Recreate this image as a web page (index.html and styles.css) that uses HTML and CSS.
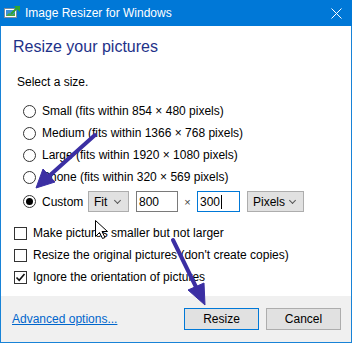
FILE: index.html
```html
<!DOCTYPE html>
<html lang="en">
<head>
    <meta charset="UTF-8">
    <title>Image Resizer for Windows</title>
    <link rel="stylesheet" href="styles.css">
</head>
<body>
    <div class="window">
        <div class="titlebar">
            <svg class="app-icon" width="16" height="13" viewBox="0 0 16 13">
                <rect x="0.5" y="2.5" width="12" height="9" fill="#fff" stroke="#7f8c99"/>
                <rect x="2" y="4" width="9" height="6" fill="#3d8fd6"/>
                <path d="M2 10 L5 7 L8 9 L11 7 L11 10 Z" fill="#4aa83a"/>
                <path d="M7 8 L13 2" stroke="#2fa52f" stroke-width="2"/>
                <path d="M10 0 L16 0 L16 6 Z" fill="#2fa52f"/>
            </svg>
            <span class="title">Image Resizer for Windows</span>
            <svg class="close" width="11" height="11" viewBox="0 0 11 11">
                <path d="M0.5 0.5 L10.5 10.5 M10.5 0.5 L0.5 10.5" stroke="#fff" stroke-width="1"/>
            </svg>
        </div>

        <div class="content">
            <h1 class="heading">Resize your pictures</h1>
            <p class="label">Select a size.</p>

            <div class="sizes">
                <label class="radio-row"><span class="radio"></span>Small (fits within 854 × 480 pixels)</label>
                <label class="radio-row"><span class="radio"></span>Medium (fits within 1366 × 768 pixels)</label>
                <label class="radio-row"><span class="radio"></span>Large (fits within 1920 × 1080 pixels)</label>
                <label class="radio-row"><span class="radio"></span>Phone (fits within 320 × 569 pixels)</label>
                <div class="radio-row custom-row">
                    <span class="radio checked"></span>
                    <span class="custom-label">Custom</span>
                    <span class="select fit">Fit<span class="chevron"></span></span>
                    <span class="textbox">800</span>
                    <span class="times">×</span>
                    <span class="textbox focused">300<span class="caret"></span></span>
                    <span class="select unit">Pixels<span class="chevron"></span></span>
                </div>
            </div>

            <div class="options">
                <label class="check-row"><span class="checkbox"></span>Make pictures smaller but not larger</label>
                <label class="check-row"><span class="checkbox"></span>Resize the original pictures (don't create copies)</label>
                <label class="check-row"><span class="checkbox checked">
                    <svg width="11" height="11" viewBox="0 0 11 11"><path d="M1.5 5.5 L4.2 8.3 L9.5 2" fill="none" stroke="#111" stroke-width="1.6"/></svg>
                </span>Ignore the orientation of pictures</label>
            </div>
        </div>

        <div class="footer">
            <a class="link" href="#">Advanced options...</a>
            <div class="buttons">
                <button class="btn default">Resize</button>
                <button class="btn">Cancel</button>
            </div>
        </div>

        <!-- annotation arrows and mouse pointer drawn over the dialog -->
        <svg class="overlay" width="352" height="343" viewBox="0 0 352 343">
            <g fill="#3b2fa3" stroke="#3b2fa3">
                <path d="M95 135 L48 177" stroke-width="4" stroke-linecap="round"/>
                <path d="M36 188 L43 169 L55 182 Z" stroke-width="1"/>
                <path d="M173 240 L197 289" stroke-width="4" stroke-linecap="round"/>
                <path d="M205 305 L188 290 L204 283 Z" stroke-width="1"/>
            </g>
            <path d="M95.5 220.5 L95.5 236.5 L99.5 232.5 L102.5 238.5 L105 237.5 L102 231.5 L107.5 231.5 Z" fill="#fff" stroke="#000" stroke-width="1"/>
        </svg>
    </div>
</body>
</html>
```

FILE: styles.css
```css
* {
    box-sizing: border-box;
    margin: 0;
    padding: 0;
}

body {
    width: 352px;
    height: 343px;
    overflow: hidden;
    font-family: 'Liberation Sans', Arial, sans-serif;
    font-size: 12px;
    color: #000;
    background: #fff;
}

.window {
    position: relative;
    width: 352px;
    height: 343px;
    display: flex;
    flex-direction: column;
    border: 1px solid #1883d7;
    border-top: none;
    border-right-width: 1px;
}

.titlebar {
    height: 26px;
    margin: 0 -1px;
    background: #0078d7;
    color: #fff;
    display: flex;
    align-items: center;
    padding-left: 4px;
    padding-right: 10px;
}

.app-icon {
    margin-right: 5px;
    margin-top: -1px;
}

.title {
    flex: 1;
    font-size: 12px;
}

.close {
    margin-top: 1px;
}

.content {
    flex: 1;
    padding: 10px 0 0 12px;
}

.heading {
    font-weight: normal;
    font-size: 16px;
    line-height: 22px;
    color: #1e3289;
}

.label {
    margin-top: 16px;
    margin-left: 4px;
    line-height: 16px;
}

.sizes {
    margin-top: 10px;
    padding-left: 10px;
}

.radio-row {
    display: flex;
    align-items: center;
    height: 22px;
}

.radio {
    width: 13px;
    height: 13px;
    border: 1px solid #333;
    border-radius: 50%;
    margin-right: 6px;
    display: flex;
    align-items: center;
    justify-content: center;
}

.radio.checked::after {
    content: '';
    width: 7px;
    height: 7px;
    border-radius: 50%;
    background: #000;
}

.custom-row {
    height: 23px;
    margin-top: 2px;
}

.custom-label {
    width: 46px;
}

.select {
    display: flex;
    align-items: center;
    height: 21px;
    background: #e1e1e1;
    border: 1px solid #adadad;
    padding-left: 5px;
}

.fit {
    width: 41px;
    margin-right: 7px;
}

.unit {
    width: 57px;
    margin-left: 7px;
}

.chevron {
    margin-left: auto;
    margin-right: 8px;
    width: 5px;
    height: 5px;
    border-right: 1px solid #555;
    border-bottom: 1px solid #555;
    transform: rotate(45deg);
    margin-top: -3px;
}

.textbox {
    display: flex;
    align-items: center;
    width: 42px;
    height: 21px;
    border: 1px solid #7a7a7a;
    padding-left: 2px;
}

.textbox.focused {
    width: 43px;
    border-color: #0078d7;
}

.caret {
    width: 1px;
    height: 14px;
    background: #000;
    margin-left: 1px;
}

.times {
    width: 19px;
    text-align: center;
    color: #444;
    font-size: 11px;
}

.options {
    margin-top: 9px;
}

.check-row {
    display: flex;
    align-items: center;
    height: 22px;
}

.checkbox {
    width: 13px;
    height: 13px;
    border: 1px solid #333;
    margin: 0 6px 0 1px;
    display: flex;
    align-items: center;
    justify-content: center;
}

.footer {
    height: 46px;
    background: #f0f0f0;
    display: flex;
    align-items: center;
    justify-content: space-between;
    padding: 0 10px 0 11px;
}

.link {
    color: #0066cc;
    text-decoration: underline;
}

.buttons {
    display: flex;
    gap: 7px;
}

.btn {
    width: 75px;
    height: 22px;
    font-family: inherit;
    font-size: 12px;
    background: #e1e1e1;
    border: 1px solid #adadad;
    color: #000;
}

.btn.default {
    border-color: #0078d7;
}

.overlay {
    position: absolute;
    left: -1px;
    top: 0;
}
```
